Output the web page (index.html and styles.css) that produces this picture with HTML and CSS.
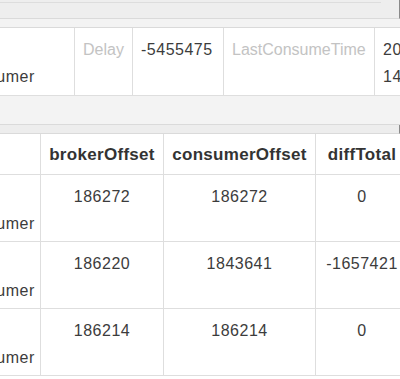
FILE: index.html
```html
<!DOCTYPE html>
<html lang="en">
<head>
<meta charset="utf-8">
<title>Consumer offsets</title>
<link rel="stylesheet" href="styles.css">
</head>
<body>
<div class="page">
  <div class="strip-top"><div class="strip-line"></div></div>
  <div class="band band-thin"></div>
  <table class="info">
    <tbody>
      <tr>
        <td class="cell name w-name-a">test<br>Consumer</td>
        <td class="cell label w-delay">Delay</td>
        <td class="cell value w-val">-5455475</td>
        <td class="cell label w-lbl">LastConsumeTime</td>
        <td class="cell value w-date">2019-06-12 14:35:20</td>
      </tr>
    </tbody>
  </table>
  <div class="band band-wide"></div>
  <div class="band band-head"></div>
  <table class="offsets">
    <thead>
      <tr>
        <th class="cell hcell w-name-b"></th>
        <th class="cell hcell w-broker">brokerOffset</th>
        <th class="cell hcell w-consumer">consumerOffset</th>
        <th class="cell hcell w-diff">diffTotal</th>
      </tr>
    </thead>
    <tbody>
      <tr>
        <td class="cell name">test<br>Consumer</td>
        <td class="cell value center">186272</td>
        <td class="cell value center">186272</td>
        <td class="cell value center">0</td>
      </tr>
      <tr>
        <td class="cell name">test<br>Consumer</td>
        <td class="cell value center">186220</td>
        <td class="cell value center">1843641</td>
        <td class="cell value center">-1657421</td>
      </tr>
      <tr>
        <td class="cell name">test<br>Consumer</td>
        <td class="cell value center">186214</td>
        <td class="cell value center">186214</td>
        <td class="cell value center">0</td>
      </tr>
    </tbody>
  </table>
</div>
</body>
</html>
```

FILE: styles.css
```css
* { box-sizing: border-box; }

html, body {
  margin: 0;
  padding: 0;
  width: 400px;
  height: 379px;
  overflow: hidden;
  background: #ffffff;
}

body {
  font-family: "Liberation Sans", Arial, sans-serif;
  color: #3c3c3c;
}

.page {
  width: 400px;
  height: 379px;
  overflow: hidden;
  background: #ffffff;
}

.strip-top {
  height: 19px;
  background: #eeeeee;
  border-bottom: 1px solid #dadada;
  border-right: 1px solid #8a8a8a;
  padding-top: 2px;
}

.strip-line {
  width: 381px;
  height: 1px;
  background: #dddddd;
}

.band {
  border-bottom: 1px solid #dadada;
}

.band-thin {
  height: 9px;
  background: #f3f3f3;
}

.band-wide {
  height: 29px;
  background: #f3f3f3;
}

.band-head {
  height: 9px;
  background: #ededed;
  border-right: 1px solid #8a8a8a;
}

table {
  border-collapse: separate;
  border-spacing: 0;
  table-layout: fixed;
  margin-left: -51px;
}

.info { width: 579px; }
.offsets { width: 460px; }

.cell {
  padding: 8px 8px 4px 8px;
  line-height: 27px;
  border-right: 1px solid #dedede;
  border-bottom: 1px solid #dedede;
  vertical-align: top;
  text-align: left;
  overflow: hidden;
}

.info .cell {
  padding-bottom: 5px;
}

.name {
  font-size: 16px;
  letter-spacing: 0.5px;
  padding-left: 8px;
  white-space: nowrap;
}

.label {
  font-size: 16px;
  color: #c3c3c3;
}

.value {
  font-size: 16px;
  letter-spacing: 0.5px;
}

.center { text-align: center; }

.hcell {
  font-size: 17px;
  font-weight: bold;
  letter-spacing: 0.3px;
  text-align: center;
  color: #333333;
  padding: 7px 4px 6px 4px;
  vertical-align: middle;
  white-space: nowrap;
}

.w-name-a { width: 126px; }
.w-delay { width: 58px; }
.w-val { width: 91px; }
.w-lbl { width: 151px; }
.w-date { width: 153px; }

.w-name-b { width: 92px; }
.w-broker { width: 123px; }
.w-consumer { width: 152px; }
.w-diff { width: 93px; }
```
